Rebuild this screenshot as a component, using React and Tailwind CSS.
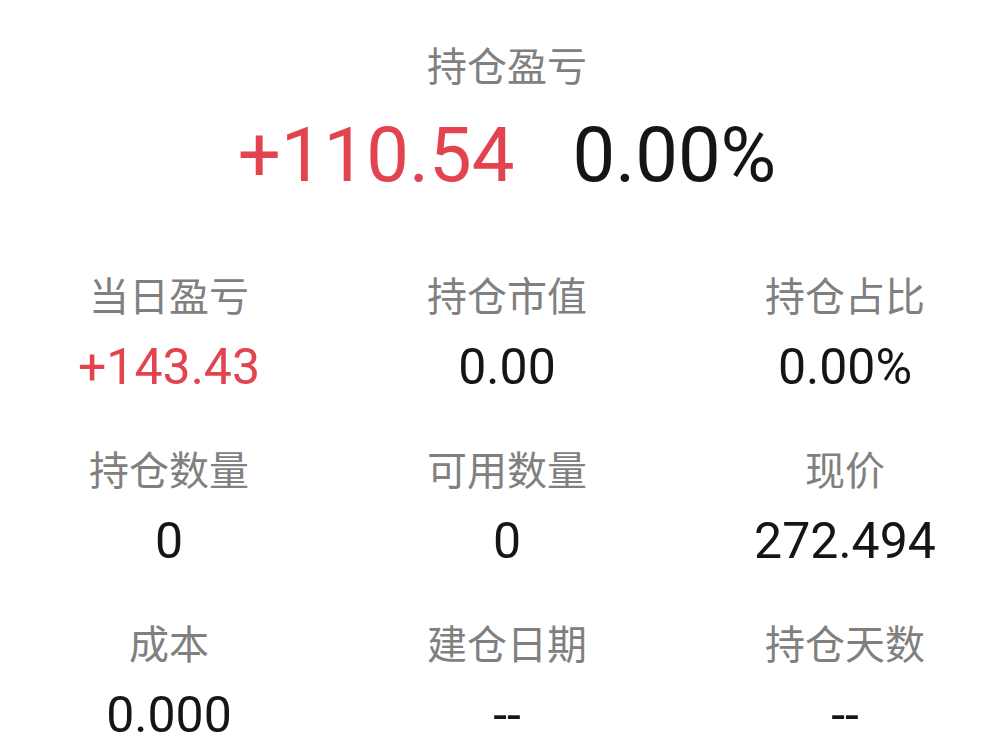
export default function App() {
  const cjk = { fontFamily: 'Roboto, "Noto Sans CJK SC", sans-serif' };
  const items = [
    { label: "当日盈亏", value: "+143.43", red: true },
    { label: "持仓市值", value: "0.00" },
    { label: "持仓占比", value: "0.00%" },
    { label: "持仓数量", value: "0" },
    { label: "可用数量", value: "0" },
    { label: "现价", value: "272.494" },
    { label: "成本", value: "0.000" },
    { label: "建仓日期", value: "--" },
    { label: "持仓天数", value: "--" },
  ];
  return (
    <div className="w-[1000px] h-[745px] overflow-hidden bg-white" style={cjk}>
      <div className="w-[1014px] flex flex-col items-center">
        <div className="mt-[44px] text-[40px] leading-[48px] text-[#808080]">持仓盈亏</div>
        <div className="mt-[23px] flex items-center gap-[58px] text-[76px] leading-[80px]">
          <span className="text-[#e2434e]">+110.54</span>
          <span className="text-[#151515]">0.00%</span>
        </div>
        <div className="mt-[79px] w-full grid grid-cols-3 gap-y-[57px]">
          {items.map((it) => (
            <div key={it.label} className="flex flex-col items-center">
              <div className="text-[40px] leading-[48px] text-[#808080]">{it.label}</div>
              <div
                className={
                  "mt-[21px] text-[50px] leading-[48px] " +
                  (it.red ? "text-[#e2434e]" : "text-[#151515]")
                }
              >
                {it.value}
              </div>
            </div>
          ))}
        </div>
      </div>
    </div>
  );
}
